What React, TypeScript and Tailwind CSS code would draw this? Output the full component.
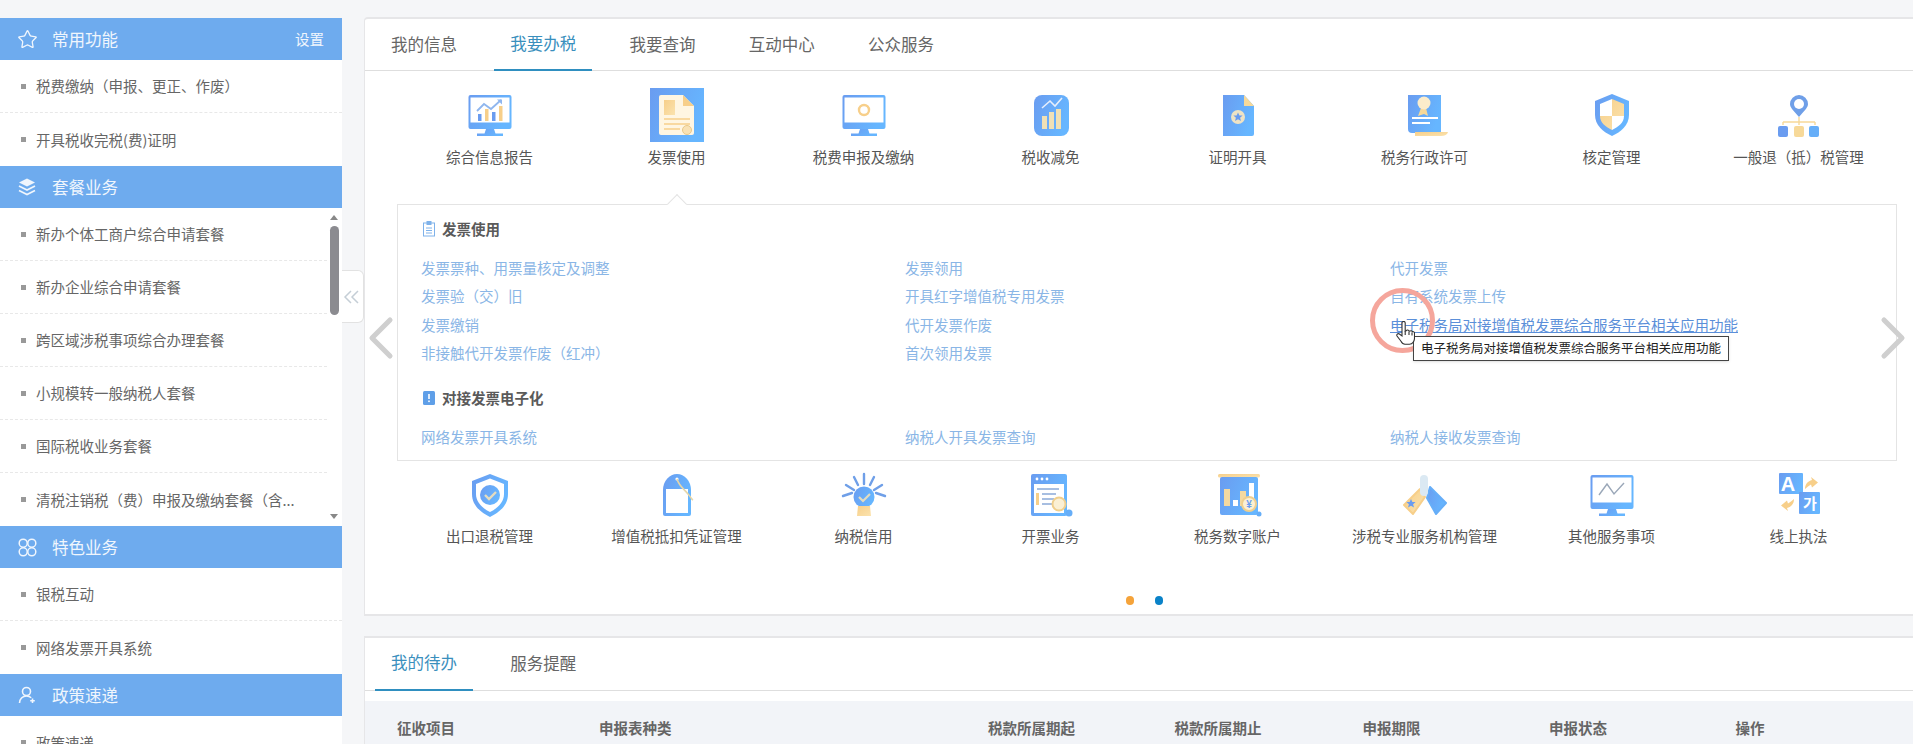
import React from 'react';
import { Star, ChevronLeft, ChevronRight } from 'lucide-react';

// shared gradients for the service icons
const Ico = ({ size = 48, children }: { size?: number; children: React.ReactNode }) => (
  <svg width={size} height={size} viewBox={`0 0 ${size} ${size}`}>
    <defs>
      <linearGradient id="gb" x1="0" y1="0" x2="1" y2="0.4">
        <stop offset="0" stopColor="#6a9cf0" />
        <stop offset="1" stopColor="#66b6ff" />
      </linearGradient>
      <linearGradient id="go" x1="0" y1="0" x2="1" y2="1">
        <stop offset="0" stopColor="#f7cf8a" />
        <stop offset="1" stopColor="#fbe3ae" />
      </linearGradient>
    </defs>
    {children}
  </svg>
);

const Monitor = ({ children }: { children: React.ReactNode }) => (
  <>
    <rect x="2.5" y="4" width="43" height="34" rx="2" fill="url(#gb)" />
    <rect x="4.5" y="6.5" width="39" height="25" fill="#fff" />
    <path d="M20 38h8l1.5 4.5H37V45H11v-2.5h7.5z" fill="url(#gb)" />
    {children}
  </>
);

const icons: Record<string, React.ReactNode> = {
  report: (
    <Ico>
      <Monitor>
        <rect x="12" y="23" width="3.5" height="7" fill="#6a9cf0" />
        <rect x="19" y="18" width="3.5" height="12" fill="#f7cf8a" />
        <rect x="26" y="21" width="3.5" height="9" fill="#6a9cf0" />
        <rect x="33" y="15" width="3.5" height="15" fill="#f7cf8a" />
        <path d="M11 20l7-7 7 5 10-9" fill="none" stroke="#8fb6ee" strokeWidth="1.8" />
        <path d="M31 8.5h5v5z" fill="#8fb6ee" />
      </Monitor>
    </Ico>
  ),
  invoice: (
    <Ico size={54}>
      <rect width="54" height="54" fill="url(#gb)" />
      <path d="M11 7h22l11 11v27a2 2 0 0 1-2 2H11a2 2 0 0 1-2-2V9a2 2 0 0 1 2-2z" fill="#fff6e2" />
      <path d="M33 7l11 11H33z" fill="#f7cf8a" />
      <rect x="14" y="12" width="11" height="15" fill="url(#go)" />
      <path d="M14 31h26M14 36h26M14 41h16" stroke="#f7cf8a" strokeWidth="1.6" />
      <circle cx="37" cy="42" r="4.5" fill="#f9e2b4" stroke="#e8c98a" />
    </Ico>
  ),
  declare: (
    <Ico>
      <Monitor>
        <circle cx="24" cy="19" r="5" fill="none" stroke="#f7cf8a" strokeWidth="2.4" />
      </Monitor>
    </Ico>
  ),
  relief: (
    <Ico>
      <rect x="7" y="4" width="35" height="41" rx="8" fill="url(#gb)" />
      <path d="M15 17l8-7 5 5 7-8" fill="none" stroke="#e6eefc" strokeWidth="1.6" />
      <rect x="15" y="25" width="5" height="13" fill="#efe0b5" />
      <rect x="22" y="21" width="5" height="17" fill="#efe0b5" />
      <rect x="29" y="18" width="5" height="20" fill="#efe0b5" />
    </Ico>
  ),
  cert: (
    <Ico>
      <path d="M9 4h21l10 11v28a2 2 0 0 1-2 2H9z" fill="url(#gb)" />
      <path d="M30 4l10 11H30z" fill="#f7d999" />
      <circle cx="24" cy="26" r="7" fill="#efe3c4" />
      <path d="M24 21.5l1.4 3h3.2l-2.5 2.2.9 3.2-3-1.7-3 1.7.9-3.2-2.5-2.2h3.2z" fill="#6a9cf0" />
    </Ico>
  ),
  permit: (
    <Ico>
      <path d="M7 4h33v38H11a4 4 0 0 1-4-4z" fill="url(#gb)" />
      <path d="M14 45h26q6 0 7-4H14z" fill="url(#go)" />
      <path d="M20 17l-3 8 6-2 4 2-2-8z" fill="#f7d999" />
      <circle cx="23" cy="12" r="6.5" fill="#fbeccb" />
      <path d="M11 27h26M11 32h18" stroke="#fff" strokeWidth="2" />
    </Ico>
  ),
  verify: (
    <Ico>
      <path d="M24 3l17 7v14c0 10-8 17-17 21C15 41 7 34 7 24V10z" fill="url(#gb)" />
      <path d="M24 8v17H12V13z" fill="#fff" />
      <path d="M24 8l12 5v12H24zM12 25h12v14c-6-3-12-7-12-14z" fill="url(#go)" />
      <path d="M24 25h12c0 7-6 11-12 14z" fill="#fff" />
    </Ico>
  ),
  refund: (
    <Ico>
      <path d="M22 24c-7-8-9-10-9-13a9 9 0 0 1 18 0c0 3-2 5-9 13z" transform="translate(2 2)" fill="#6f9fe8" />
      <circle cx="24" cy="13" r="5" fill="#fff" />
      <path d="M8 31h32M24 26v5M8 31v3M24 31v3M40 31v3" stroke="#f7d999" strokeWidth="1.4" fill="none" />
      <rect x="3" y="35" width="10" height="11" rx="2" fill="#6a9cf0" />
      <rect x="19" y="35" width="10" height="11" rx="2" fill="#f7d999" />
      <rect x="34" y="35" width="10" height="11" rx="2" fill="#66aef8" />
    </Ico>
  ),
  exportTax: (
    <Ico>
      <path d="M24 3l18 7v13c0 11-8 18-18 23C14 41 6 34 6 23V10z" fill="url(#gb)" />
      <path d="M24 7.5l14 5.5v10c0 8-6 14-14 18-8-4-14-10-14-18V13z" fill="#fff" />
      <circle cx="24" cy="24" r="10" fill="url(#gb)" />
      <path d="M19 24l4 4 7-7" fill="none" stroke="#e3dcc0" strokeWidth="2.4" />
    </Ico>
  ),
  deduct: (
    <Ico>
      <path d="M10 19a14 16 0 0 1 28 0v24a2 2 0 0 1-2 2H12a2 2 0 0 1-2-2z" fill="url(#gb)" />
      <rect x="13" y="18" width="22" height="24" fill="#fff" />
      <circle cx="24" cy="8" r="1.6" fill="#fff" />
      <path d="M24 8c2 7 7 10 11 15 3 3 3 5 5 6" fill="none" stroke="#e6d6a8" strokeWidth="1.6" />
    </Ico>
  ),
  credit: (
    <Ico>
      <path d="M24 3v10M14 6l4 8M34 6l-4 8M6 14l8 5M42 14l-8 5M3 25l9-3M45 25l-9-3" stroke="#6f9fe8" strokeWidth="2.4" strokeLinecap="round" />
      <circle cx="24" cy="26" r="10.5" fill="url(#gb)" />
      <path d="M19 26l4 4 7-7" fill="none" stroke="#e3dcc0" strokeWidth="2.2" />
      <path d="M18 35h12l1 10H17z" fill="url(#go)" />
    </Ico>
  ),
  billing: (
    <Ico>
      <rect x="4" y="3" width="36" height="42" rx="2" fill="url(#gb)" />
      <rect x="7" y="13" width="30" height="29" fill="#fff" />
      <circle cx="10" cy="8" r="1.4" fill="#fff" />
      <circle cx="15" cy="8" r="1.4" fill="#fff" />
      <circle cx="20" cy="8" r="1.4" fill="#fff" />
      <path d="M10 18h22M15 23h14M15 28h12M15 33h10" stroke="#8aa9d8" strokeWidth="1.6" />
      <rect x="9" y="22" width="3" height="12" fill="#f7cf8a" />
      <circle cx="32" cy="33" r="6.5" fill="#fbf0d4" stroke="#f0cf8d" strokeWidth="2" />
      <circle cx="42" cy="42" r="3.5" fill="#66aef8" />
    </Ico>
  ),
  digital: (
    <Ico>
      <rect x="4" y="3" width="42" height="3.5" rx="1.5" fill="url(#go)" />
      <rect x="6" y="6" width="38" height="38" rx="2" fill="url(#gb)" />
      <rect x="10" y="18" width="6" height="17" fill="#f4d9a0" />
      <rect x="19" y="29" width="5" height="6" fill="#fff" />
      <rect x="26" y="20" width="6" height="15" fill="#f4d9a0" />
      <rect x="35" y="12" width="5" height="17" fill="#fff" />
      <circle cx="35" cy="33" r="7" fill="#fbf0d4" stroke="#f0cf8d" strokeWidth="2" />
      <text x="35" y="37" textAnchor="middle" fontSize="10" fontWeight="700" fontFamily="Liberation Sans, sans-serif" fill="#6a9cf0">¥</text>
      <circle cx="45" cy="43" r="2.5" fill="#66aef8" />
    </Ico>
  ),
  agency: (
    <Ico>
      <path d="M19 18L3 34l9 9 12-17z" fill="url(#go)" stroke="#f7cf8a" strokeWidth="2" strokeLinejoin="round" />
      <path d="M29 16l16 16-10 11-9-16z" fill="url(#gb)" stroke="#66aef8" strokeWidth="2" strokeLinejoin="round" />
      <rect x="19" y="4" width="8" height="21" rx="4" fill="#dbe9f3" />
      <path d="M10 28l1.4 3h3.2l-2.5 2.2.9 3.2-3-1.7-3 1.7.9-3.2-2.5-2.2h3.2z" fill="#6a9cf0" />
    </Ico>
  ),
  other: (
    <Ico>
      <Monitor>
        <path d="M11 24l8-11 7 10 10-11" fill="none" stroke="#9aa7b8" strokeWidth="1.4" />
      </Monitor>
    </Ico>
  ),
  online: (
    <Ico>
      <rect x="4" y="2" width="24" height="21" rx="1" fill="url(#gb)" />
      <text x="13" y="20" textAnchor="middle" fontSize="20" fontWeight="700" fontFamily="Liberation Sans, sans-serif" fill="#fff">A</text>
      <rect x="24" y="21" width="21" height="22" rx="1" fill="url(#gb)" />
      <text x="35" y="38" textAnchor="middle" fontSize="15" fontWeight="700" fontFamily="Noto Sans CJK KR, sans-serif" fill="#fff">가</text>
      <path d="M30 18c0-5 3-8 7-9l-1-3 7 5.500-6 5-1-3c-2 1-4 3-6 4.500z" fill="#f7cf8a" />
      <path d="M19 28c0 5-3 8-7 9l1 3-7-5.500 6-5 1 3c2-1 4-3 6-4.500z" fill="#f7cf8a" />
    </Ico>
  ),
};

const row1 = [
  { key: 'report', label: '综合信息报告' },
  { key: 'invoice', label: '发票使用' },
  { key: 'declare', label: '税费申报及缴纳' },
  { key: 'relief', label: '税收减免' },
  { key: 'cert', label: '证明开具' },
  { key: 'permit', label: '税务行政许可' },
  { key: 'verify', label: '核定管理' },
  { key: 'refund', label: '一般退（抵）税管理' },
];

const row2 = [
  { key: 'exportTax', label: '出口退税管理' },
  { key: 'deduct', label: '增值税抵扣凭证管理' },
  { key: 'credit', label: '纳税信用' },
  { key: 'billing', label: '开票业务' },
  { key: 'digital', label: '税务数字账户' },
  { key: 'agency', label: '涉税专业服务机构管理' },
  { key: 'other', label: '其他服务事项' },
  { key: 'online', label: '线上执法' },
];

const SideHead = ({ icon, title, right }: { icon: React.ReactNode; title: string; right?: string }) => (
  <div className="h-[42px] bg-[#6eabee] flex items-center pl-[18px] pr-[18px] gap-[16px] text-[#f0f6fd] shrink-0">
    <span className="w-[18px] h-[18px] flex items-center justify-center">{icon}</span>
    <span className="text-[16.5px] flex-1">{title}</span>
    {right && <span className="text-[14.5px]">{right}</span>}
  </div>
);

const SideItem = ({ text, line = true, inner = false }: { text: string; line?: boolean; inner?: boolean }) => (
  <div className={`h-[53px] flex items-center gap-[10px] pl-[21px] text-[14.5px] text-[#666] ${line ? 'border-b border-dashed border-[#e8e8e8]' : ''} ${inner ? 'w-[327px]' : ''}`}>
    <span className="w-[5px] h-[5px] bg-[#999] shrink-0" />
    <span className="whitespace-nowrap">{text}</span>
  </div>
);

const Cell = ({ item, mt }: { item: { key: string; label: string }; mt: string }) => (
  <div className="flex flex-col items-center">
    <div className="w-[54px] h-[54px] flex items-center justify-center">{icons[item.key]}</div>
    <div className={`${mt} h-[20px] leading-[20px] text-[14.5px] text-[#555] whitespace-nowrap`}>{item.label}</div>
  </div>
);

const A = ({ children }: { children: React.ReactNode }) => (
  <div className="h-[28.33px] leading-[28.33px] text-[14.5px] text-[#8ab6e6] whitespace-nowrap">{children}</div>
);

const Heading = ({ icon, title }: { icon: React.ReactNode; title: string }) => (
  <div className="h-[20px] flex items-center gap-[6px] ml-[1px] text-[14.5px] font-bold text-[#5a5a5a]">
    {icon}
    <span>{title}</span>
  </div>
);

const Tabs = ({ items, active, h }: { items: string[]; active: number; h: string }) => (
  <div className={`${h} flex pl-[10px] gap-[21.25px] border-b border-[#dedede]`}>
    {items.map((t, i) => (
      <div
        key={t}
        className={`w-[98px] flex items-center justify-center pb-[2px] text-[16.5px] -mb-px ${i === active ? 'text-[#3a8fbd] border-b-[2px] border-[#2f8fc0]' : 'text-[#666]'}`}
      >
        {t}
      </div>
    ))}
  </div>
);

export default function App() {
  return (
    <div className="h-[744px] overflow-hidden bg-[#f5f6f8] pt-[17px] flex font-['Noto_Sans_CJK_SC','Liberation_Sans',sans-serif]">
      {/* 左侧菜单 */}
      <div className="w-[342px] mt-px bg-white shrink-0">
        <SideHead icon={<Star size={21} strokeWidth={1.5} className="shrink-0" />} title="常用功能" right="设置" />
        <SideItem text="税费缴纳（申报、更正、作废）" />
        <SideItem text="开具税收完税(费)证明" line={false} />
        <SideHead
          icon={
            <svg width="18" height="18" viewBox="0 0 18 18" className="shrink-0">
              <path d="M9 0.5l8 4-8 4-8-4z" fill="currentColor" />
              <path d="M1 8l8 4 8-4M1 12.500l8 4 8-4" fill="none" stroke="currentColor" strokeWidth="1.7" />
            </svg>
          }
          title="套餐业务"
        />
        <div className="relative h-[318px] overflow-hidden">
          <SideItem inner text="新办个体工商户综合申请套餐" />
          <SideItem inner text="新办企业综合申请套餐" />
          <SideItem inner text="跨区域涉税事项综合办理套餐" />
          <SideItem inner text="小规模转一般纳税人套餐" />
          <SideItem inner text="国际税收业务套餐" />
          <SideItem inner text="清税注销税（费）申报及缴纳套餐（含..." line={false} />
          {/* 滚动条 */}
          <div className="absolute right-[4px] top-[7px] w-0 h-0 border-x-[4px] border-x-transparent border-b-[5px] border-b-[#888]" />
          <div className="absolute right-[3px] top-[18px] w-[9px] h-[89px] rounded-full bg-[#8b8b90]" />
          <div className="absolute right-[4px] bottom-[7px] w-0 h-0 border-x-[4px] border-x-transparent border-t-[5px] border-t-[#888]" />
        </div>
        <SideHead
          icon={
            <svg width="19" height="19" viewBox="0 0 19 19" fill="none" stroke="currentColor" strokeWidth="1.5" className="shrink-0">
              <circle cx="5.200" cy="5.200" r="4" />
              <circle cx="13.800" cy="5.200" r="4" />
              <circle cx="5.200" cy="13.800" r="4" />
              <circle cx="13.800" cy="13.800" r="4" />
            </svg>
          }
          title="特色业务"
        />
        <SideItem text="银税互动" />
        <SideItem text="网络发票开具系统" line={false} />
        <SideHead
          icon={
            <svg width="18" height="18" viewBox="0 0 18 18" fill="none" stroke="currentColor" strokeWidth="1.6" className="shrink-0">
              <circle cx="8.500" cy="5.500" r="4" />
              <path d="M1.500 17c0-4 3-7 7-7 2 0 3.500.6 4.700 1.800" />
              <path d="M14.500 12.500v4.500M12.200 14.800h4.600" />
            </svg>
          }
          title="政策速递"
        />
        <SideItem text="政策速递" line={false} />
      </div>

      {/* 收起按钮 */}
      <div className="w-[22px] shrink-0 pt-[253px]">
        <div className="w-[22px] h-[53px] bg-white border border-l-0 border-[#e2e2e2] rounded-r-md flex items-center pl-[1px]">
          <svg width="18" height="14" viewBox="0 0 18 14" fill="none" stroke="#c5ced6" strokeWidth="1.5">
            <path d="M8 1L2 7l6 6M15 1L9 7l6 6" />
          </svg>
        </div>
      </div>

      <div className="flex-1 min-w-0 flex flex-col gap-[20px]">
        {/* 我要办税 */}
        <div className="relative bg-white border-t-2 border-b-2 border-l border-[#e6e6e8] rounded-tl-sm">
          <Tabs items={['我的信息', '我要办税', '我要查询', '互动中心', '公众服务']} active={1} h="h-[52px]" />

          <div className="pt-[17px] pl-[32px] pr-[16px]">
            <div className="grid grid-cols-[repeat(8,187px)] -ml-px">
              {row1.map(item => <Cell key={item.key} item={item} mt="mt-[5px]" />)}
            </div>

            <div className="relative mt-[37px] h-[257px] bg-white border border-[#e4e4e4] pl-[23px] pt-[14px]">
              <div className="absolute left-[272px] -top-[8px] w-[14px] h-[14px] rotate-45 bg-white border-l border-t border-[#e4e4e4]" />
              <Heading
                title="发票使用"
                icon={
                  <svg width="14" height="16" viewBox="0 0 14 16" fill="none" stroke="#7fb2ea" strokeWidth="1">
                    <rect x="1.500" y="2" width="11" height="13" />
                    <rect x="5" y="0.500" width="4" height="3" fill="#7fb2ea" />
                    <path d="M4 7h6M4 9.500h6M4 12h6" />
                  </svg>
                }
              />
              <div className="mt-[15px] grid grid-cols-[484px_485px_1fr]">
                <div>
                  <A>发票票种、用票量核定及调整</A>
                  <A>发票验（交）旧</A>
                  <A>发票缴销</A>
                  <A>非接触代开发票作废（红冲）</A>
                </div>
                <div>
                  <A>发票领用</A>
                  <A>开具红字增值税专用发票</A>
                  <A>代开发票作废</A>
                  <A>首次领用发票</A>
                </div>
                <div>
                  <A>代开发票</A>
                  <A>自有系统发票上传</A>
                  <div className="relative h-[28.33px] leading-[28.33px] text-[14.5px] text-[#5b8fd9] underline whitespace-nowrap">
                    电子税务局对接增值税发票综合服务平台相关应用功能
                    <div className="absolute -left-[20px] -top-[23px] w-[65px] h-[65px] rounded-full border-[5px] border-[#f5a69c]" />
                    <div className="absolute left-[23px] top-[25px] w-[316px] h-[25px] pl-[7px] flex items-center bg-white border border-[#444] text-[12.5px] text-[#222] no-underline shadow-sm">
                      电子税务局对接增值税发票综合服务平台相关应用功能
                    </div>
                    {/* 鼠标手形 */}
                    <svg width="19" height="25" viewBox="0 0 19 25" className="absolute left-[6px] top-[10px]" fill="#fff" stroke="#333" strokeWidth="1.1">
                      <path d="M6 2a1.600 1.600 0 0 1 3.200 0v8l1-.2a1.500 1.500 0 0 1 2.800.4l.9-.1a1.500 1.500 0 0 1 2.400.7a1.500 1.500 0 0 1 2.200 1.400v5c0 3-2 6-5 6H9c-2 0-3-1-4-3L1 15a1.600 1.600 0 0 1 2.400-2L6 15z" />
                      <path d="M9.200 10v4M13 11v3M16 11.500v3" fill="none" />
                    </svg>
                  </div>
                  <A>&nbsp;</A>
                </div>
              </div>
              <div className="mt-[21px]">
                <Heading
                  title="对接发票电子化"
                  icon={
                    <svg width="14" height="16" viewBox="0 0 14 16">
                      <rect x="1" y="1" width="12" height="14" rx="1.500" fill="#5f9fe8" />
                      <rect x="6.200" y="4" width="1.600" height="5" fill="#fff" />
                      <rect x="6.200" y="10.500" width="1.600" height="1.600" fill="#fff" />
                    </svg>
                  }
                />
              </div>
              <div className="mt-[15px] grid grid-cols-[484px_485px_1fr]">
                <A>网络发票开具系统</A>
                <A>纳税人开具发票查询</A>
                <A>纳税人接收发票查询</A>
              </div>
            </div>

            <div className="grid grid-cols-[repeat(8,187px)] -ml-px mt-[7px]">
              {row2.map(item => <Cell key={item.key} item={item} mt="mt-[4px]" />)}
            </div>

            <div className="mt-[50px] mb-[9px] h-[9px] pl-[729px] flex gap-[21px]">
              <span className="w-[8px] h-[9px] rounded-full bg-[#f5a33a]" />
              <span className="w-[8px] h-[9px] rounded-full bg-[#0a82c8]" />
            </div>
          </div>

          <ChevronLeft size={72} strokeWidth={1.7} className="absolute -left-[20px] top-[283px] text-[#cfcfcf]" />
          <ChevronRight size={72} strokeWidth={1.7} className="absolute -right-[16px] top-[283px] text-[#cfcfcf]" />
        </div>

        {/* 我的待办 */}
        <div className="bg-white border-t-2 border-l border-[#e6e6e8]">
          <Tabs items={['我的待办', '服务提醒']} active={0} h="h-[53px]" />
          <div className="mt-[10px] h-[54px] bg-[#f2f4f8] pl-[32px] grid grid-cols-[202px_389px_186.5px_188px_186.5px_186.5px_1fr] items-center text-[14.5px] font-bold text-[#666]">
            <div>征收项目</div>
            <div>申报表种类</div>
            <div>税款所属期起</div>
            <div>税款所属期止</div>
            <div>申报期限</div>
            <div>申报状态</div>
            <div>操作</div>
          </div>
        </div>
      </div>
    </div>
  );
}
